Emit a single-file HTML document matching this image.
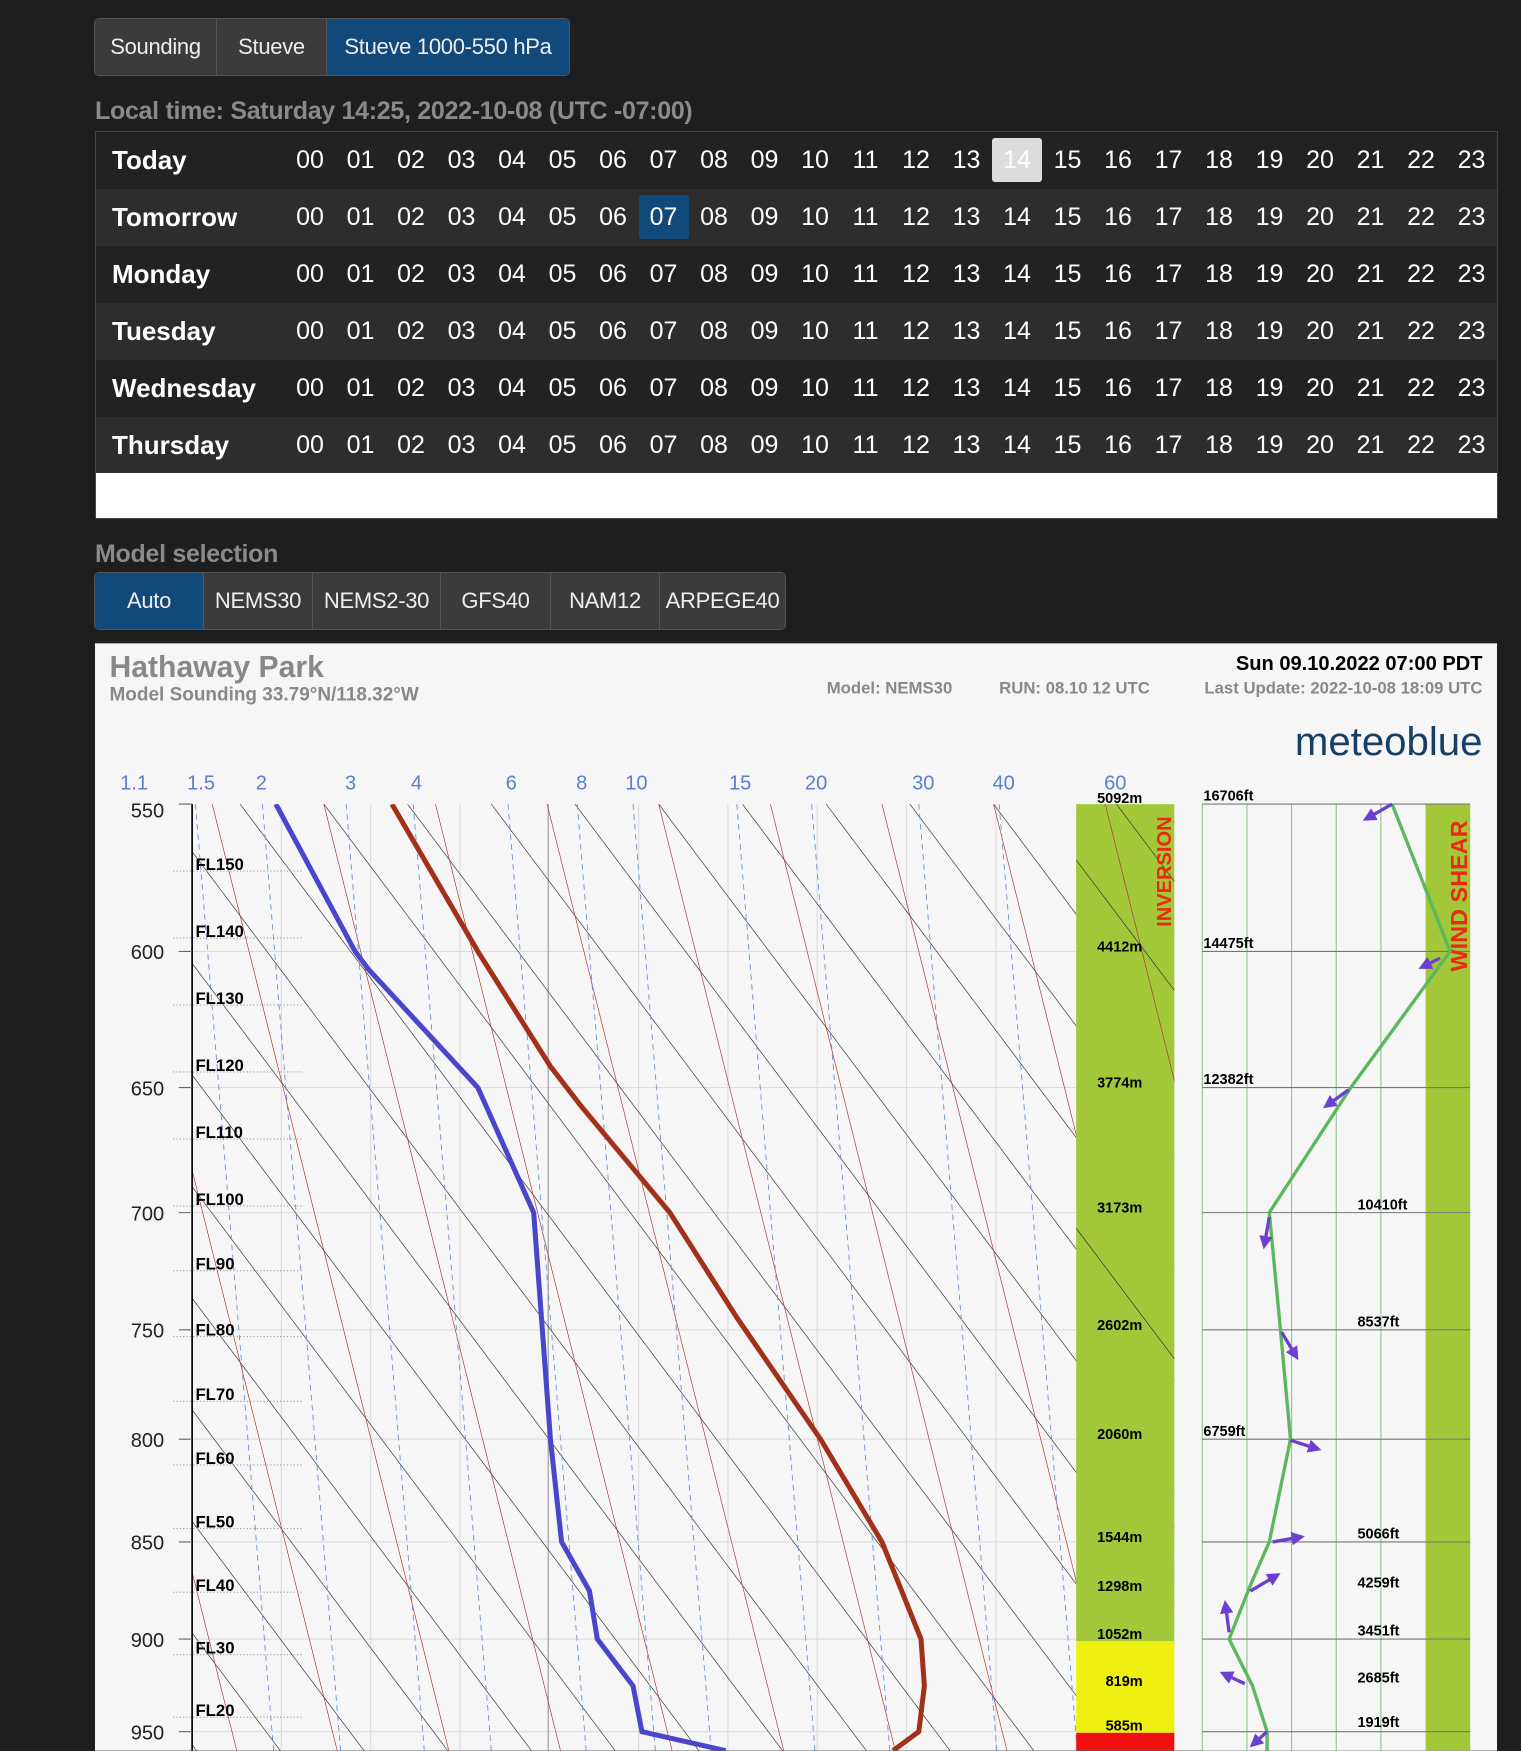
<!DOCTYPE html>
<html><head><meta charset="utf-8"><style>
body{margin:0;background:#1e1e1e;width:1521px;height:1751px;overflow:hidden;font-family:"Liberation Sans",sans-serif;position:relative}
.abs{position:absolute}
.btn{position:absolute;top:0;height:56px;line-height:56px;text-align:center;color:#eee;font-size:22px;background:#3b3b3b;border-right:1px solid #555;box-sizing:border-box;letter-spacing:-0.3px}
.grp{position:absolute;border:1px solid #555;border-radius:5px;overflow:hidden}
.h2{position:absolute;color:#8a8a8a;font-weight:bold;font-size:25px;letter-spacing:-0.3px}
.row{position:absolute;left:0;width:1401px;height:57px}
.row .lbl{position:absolute;left:16px;top:0;line-height:57px;color:#fff;font-weight:bold;font-size:26px}
.row span.h{position:absolute;top:0;line-height:57px;color:#fff;font-size:25px;width:50px;text-align:center}
</style></head><body>
<div class="grp" style="left:94px;top:18px;width:474px;height:56px">
<div class="btn" style="left:0;width:122px">Sounding</div>
<div class="btn" style="left:122px;width:110px">Stueve</div>
<div class="btn" style="left:232px;width:242px;background:#11497a;border:none">Stueve 1000-550 hPa</div>
</div>
<div class="h2" style="left:95px;top:97px">Local time: Saturday 14:25, 2022-10-08 (UTC -07:00)</div>
<div class="abs" style="left:95px;top:131px;width:1401px;height:386px;border:1px solid #444;background:#222">
<div id="rows"></div>
<div class="abs" style="left:0;top:341px;width:1401px;height:45px;background:#fff"></div>
</div>
<div class="h2" style="left:95px;top:540px">Model selection</div>
<div class="grp" style="left:94px;top:572px;width:690px;height:56px">
<div class="btn" style="left:0;width:109px;background:#11497a">Auto</div>
<div class="btn" style="left:109px;width:109px">NEMS30</div>
<div class="btn" style="left:218px;width:128px">NEMS2-30</div>
<div class="btn" style="left:346px;width:110px">GFS40</div>
<div class="btn" style="left:456px;width:109px">NAM12</div>
<div class="btn" style="left:565px;width:125px;border:none">ARPEGE40</div>
</div>
<svg class="abs" style="left:95px;top:643px" width="1402" height="1108" viewBox="85 576 1256 992" font-family="Liberation Sans, sans-serif">
<defs><clipPath id="c"><rect x="172" y="720" width="880" height="848"/></clipPath>
<marker id="ar" markerWidth="4" markerHeight="4" refX="2" refY="2" orient="auto"><path d="M0,0 L4,2 L0,4z" fill="#6b3fd0"/></marker></defs>
<rect x="85" y="576" width="1256" height="992" fill="#f6f6f6"/>
<text x="98" y="606" font-size="27" font-weight="bold" fill="#888">Hathaway Park</text>
<text x="98" y="627" font-size="17" font-weight="bold" fill="#888">Model Sounding  33.79°N/118.32°W</text>
<text x="1328" y="600" font-size="18" font-weight="bold" fill="#000" text-anchor="end">Sun 09.10.2022  07:00 PDT</text>
<text x="1328" y="621" font-size="15" font-weight="bold" fill="#888" text-anchor="end">Last Update: 2022-10-08 18:09 UTC</text>
<text x="1030" y="621" font-size="15" font-weight="bold" fill="#888" text-anchor="end">RUN: 08.10 12 UTC</text>
<text x="853" y="621" font-size="15" font-weight="bold" fill="#888" text-anchor="end">Model: NEMS30</text>
<text x="1328" y="676" font-size="36" fill="#173f66" text-anchor="end">meteoblue</text>
<g font-size="18" fill="#5a7fd0" text-anchor="middle">
<text x="120" y="707">1.1</text><text x="180" y="707">1.5</text><text x="234" y="707">2</text><text x="314" y="707">3</text><text x="373" y="707">4</text><text x="458" y="707">6</text><text x="521" y="707">8</text><text x="570" y="707">10</text><text x="663" y="707">15</text><text x="731" y="707">20</text><text x="827" y="707">30</text><text x="899" y="707">40</text><text x="999" y="707">60</text></g>
<g clip-path="url(#c)">
<g stroke="#ddd" stroke-width="1"><path d="M172 852H1052M172 974H1052M172 1086H1052M172 1191H1052M172 1289H1052M172 1381H1052M172 1468H1052M172 1551H1052"/>
<path d="M252 720V1568M332 720V1568M412 720V1568M572 720V1568M652 720V1568M732 720V1568M812 720V1568M892 720V1568M972 720V1568"/></g>
<path d="M491 720V1568" stroke="#999"/>
<g stroke="#333" stroke-width="0.6">
<path d="M-460 720l636 848M-385 720l636 848M-310 720l636 848M-235 720l636 848M-160 720l636 848M-85 720l636 848M-10 720l636 848M65 720l636 848M140 720l636 848M215 720l636 848M290 720l636 848M365 720l636 848M440 720l636 848M515 720l636 848M590 720l636 848M665 720l636 848M740 720l636 848M815 720l636 848M890 720l636 848M965 720l636 848M1040 720l636 848"/></g>
<g stroke="#a33" stroke-width="0.6">
<path d="M0 720l212 848M90 720l212 848M190 720l212 848M290 720l212 848M390 720l212 848M490 720l212 848M590 720l212 848M690 720l212 848M790 720l212 848M890 720l212 848M990 720l212 848"/></g>
<g stroke="#6a8fd8" stroke-width="0.8" stroke-dasharray="5,4">
<path d="M175 720l70 848M235 720l70 848M310 720l70 848M370 720l70 848M455 720l70 848M517 720l70 848M567 720l70 848M660 720l70 848M727 720l70 848M823 720l70 848M895 720l70 848M995 720l70 848"/></g>
<rect x="964" y="720" width="88" height="750" fill="#a2c83a"/>
<rect x="964" y="1470" width="88" height="82" fill="#eef010"/>
<rect x="964" y="1552" width="88" height="20" fill="#f01010"/>
<path d="M964 770l88 117M964 1100l88 117M1000 720l88 117" stroke="#333" stroke-width="0.6"/>
<path d="M990 720l212 848" stroke="#a33" stroke-width="0.6"/>
<polyline points="247,720 318,852 330,868 428,974 478,1086 493,1289 503,1381 528,1425 535,1468 567,1510 575,1551 650,1568" fill="none" stroke="#4a46cc" stroke-width="4.5"/>
<polyline points="351,720 428,852 493,955 520,990 600,1086 660,1180 735,1289 790,1381 825,1468 828,1510 823,1551 800,1568" fill="none" stroke="#a3301a" stroke-width="4.5"/>
</g>
<path d="M172 720V1568" stroke="#000" stroke-width="1.5"/>
<g stroke="#666"><path d="M160 720H172M160 852H172M160 974H172M160 1086H172M160 1191H172M160 1289H172M160 1381H172M160 1468H172M160 1551H172"/></g>
<g font-size="18" fill="#222" text-anchor="end">
<text x="147" y="732">550</text><text x="147" y="859">600</text><text x="147" y="981">650</text><text x="147" y="1093">700</text><text x="147" y="1198">750</text><text x="147" y="1296">800</text><text x="147" y="1388">850</text><text x="147" y="1475">900</text><text x="147" y="1558">950</text></g>
<g stroke="#999" stroke-dasharray="1,2"><path d="M155 780H272M155 840H272M155 900H272M155 960H272M155 1020H272M155 1080H272M155 1138H272M155 1197H272M155 1255H272M155 1312H272M155 1369H272M155 1426H272M155 1482H272M155 1538H272"/></g>
<g font-size="15" font-weight="bold" fill="#000">
<text x="175" y="779">FL150</text><text x="175" y="839">FL140</text><text x="175" y="899">FL130</text><text x="175" y="959">FL120</text><text x="175" y="1019">FL110</text><text x="175" y="1079">FL100</text><text x="175" y="1137">FL90</text><text x="175" y="1196">FL80</text><text x="175" y="1254">FL70</text><text x="175" y="1311">FL60</text><text x="175" y="1368">FL50</text><text x="175" y="1425">FL40</text><text x="175" y="1481">FL30</text><text x="175" y="1537">FL20</text></g>
<g font-size="13" font-weight="bold" fill="#000" text-anchor="middle">
<text x="1003" y="719">5092m</text><text x="1003" y="852">4412m</text><text x="1003" y="974">3774m</text><text x="1003" y="1086">3173m</text><text x="1003" y="1191">2602m</text><text x="1003" y="1289">2060m</text><text x="1003" y="1381">1544m</text><text x="1003" y="1425">1298m</text><text x="1003" y="1468">1052m</text><text x="1007" y="1510">819m</text><text x="1007" y="1550">585m</text></g>
<text transform="translate(1049,830) rotate(-90)" font-size="18" font-weight="bold" fill="#e82a10">INVERSION</text>
<rect x="1077" y="720" width="240" height="848" fill="#f6f6f6"/>
<rect x="1277" y="720" width="40" height="848" fill="#a2c83a"/>
<g stroke="#8fc48f" stroke-width="1"><path d="M1077 720V1568M1117 720V1568M1157 720V1568M1197 720V1568M1237 720V1568"/></g>
<g stroke="#777"><path d="M1077 720H1317M1077 852H1317M1077 974H1317M1077 1086H1317M1077 1191H1317M1077 1289H1317M1077 1381H1317M1077 1468H1317M1077 1551H1317"/></g>
<text transform="translate(1314,870) rotate(-90)" font-size="21" font-weight="bold" fill="#e82a10">WIND SHEAR</text>
<polyline points="1247,720 1299,852 1210,974 1137,1086 1147,1191 1156,1289 1137,1381 1120,1420 1101,1468 1122,1510 1135,1551 1135,1568" fill="none" stroke="#5cb85c" stroke-width="3"/>
<g stroke="#6b3fd0" stroke-width="3" marker-end="url(#ar)">
<path d="M1247 720L1226 732"/><path d="M1290 858L1276 865"/><path d="M1208 976L1190 989"/><path d="M1137 1090L1133 1113"/><path d="M1148 1193L1160 1213"/><path d="M1156 1290L1178 1297"/><path d="M1140 1381L1163 1377"/><path d="M1120 1425L1142 1412"/><path d="M1101 1462L1098 1439"/><path d="M1115 1508L1098 1500"/><path d="M1135 1551L1124 1561"/></g>
<g font-size="13" font-weight="bold" fill="#000">
<text x="1078" y="717">16706ft</text><text x="1078" y="849">14475ft</text><text x="1078" y="971">12382ft</text><text x="1216" y="1083">10410ft</text><text x="1216" y="1188">8537ft</text><text x="1078" y="1286">6759ft</text><text x="1216" y="1378">5066ft</text><text x="1216" y="1422">4259ft</text><text x="1216" y="1465">3451ft</text><text x="1216" y="1507">2685ft</text><text x="1216" y="1547">1919ft</text></g>
</svg>
<script>
var d=["Today","Tomorrow","Monday","Tuesday","Wednesday","Thursday"],h="";
for(var r=0;r<6;r++){h+='<div class="row" style="top:'+(r*57)+'px;background:'+(r%2?'#2d2d2d':'#222')+'"><div class="lbl">'+d[r]+'</div>';
for(var i=0;i<24;i++){var x=189+i*50.5,st='left:'+x+'px';
if(r==0&&i==14)st+=';background:#dcdcdc;border-radius:3px;top:6px;height:44px;line-height:44px';
if(r==1&&i==7)st+=';background:#11497a;border-radius:3px;top:6px;height:44px;line-height:44px';
h+='<span class="h" style="'+st+'">'+(i<10?'0':'')+i+'</span>';}
h+='</div>';}
document.getElementById('rows').innerHTML=h;
</script>
</body></html>
